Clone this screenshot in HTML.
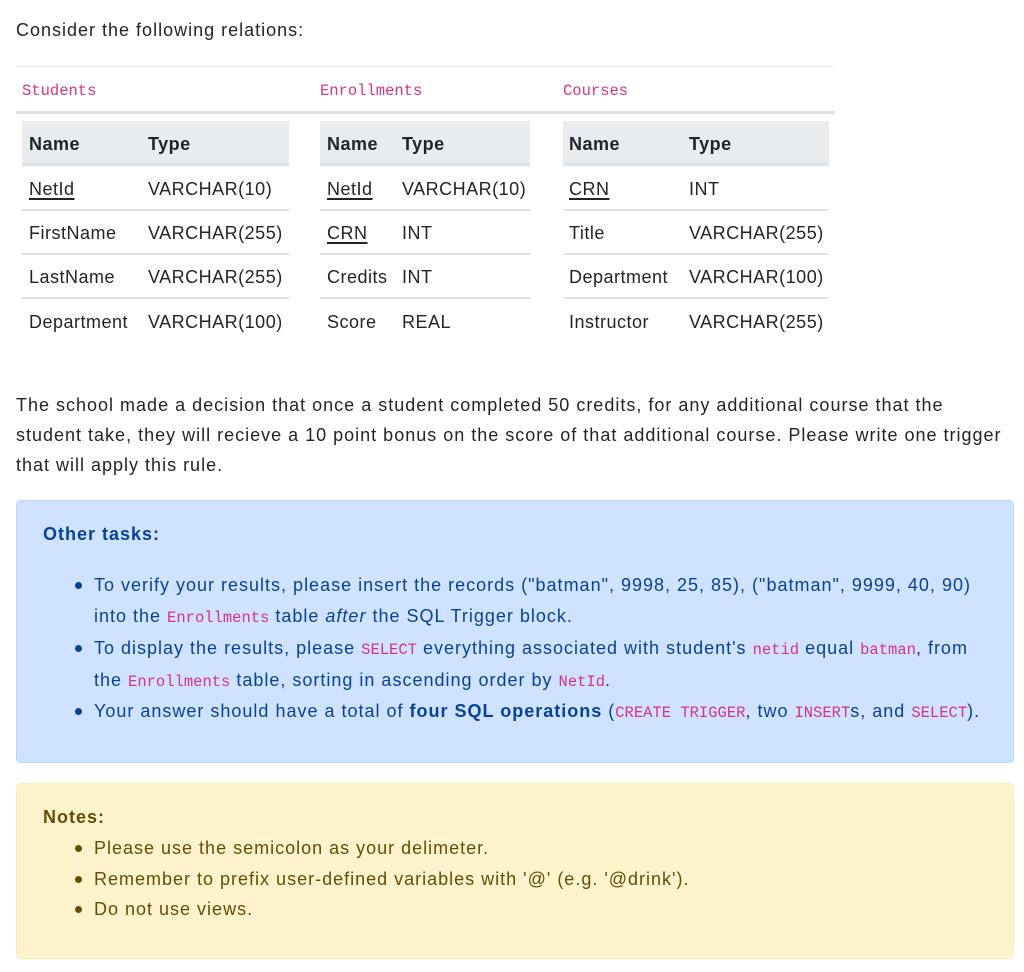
<!DOCTYPE html>
<html><head><meta charset="utf-8"><style>
*{margin:0;padding:0;box-sizing:border-box}
body{width:1024px;height:972px;background:#fff;font-family:"Liberation Sans",sans-serif;font-size:18px;letter-spacing:1px;color:#212529;position:relative;overflow:hidden}
.a{position:absolute;white-space:nowrap}
code,.c{font-family:"Liberation Mono",monospace;font-size:15.5px;letter-spacing:0;color:#d63384}
.hdr{position:absolute;background:#e9ecef;height:45px;border-bottom:3px solid #dee2e6}
.rl{position:absolute;height:2px;background:#dee2e6}
.t{position:absolute;white-space:nowrap;line-height:20px;letter-spacing:0.5px}
.b{font-weight:bold}
u{text-decoration-thickness:2px;text-underline-offset:3px}
.box{position:absolute;border-radius:5px}
.dot{position:absolute;width:7px;height:7px;border-radius:50%}
</style></head><body>
<div class="a" style="left:16px;top:20px">Consider the following relations:</div>
<div style="position:absolute;left:16px;top:66px;width:819px;height:1px;background:#e9ecef"></div>
<div class="a c" style="left:22px;top:82px">Students</div>
<div class="a c" style="left:320px;top:82px">Enrollments</div>
<div class="a c" style="left:563px;top:82px">Courses</div>
<div style="position:absolute;left:16px;top:111px;width:819px;height:3px;background:#dee2e6"></div>

<div class="hdr" style="left:22px;top:121px;width:267px"></div>
<div class="rl" style="left:22px;top:209px;width:267px"></div>
<div class="rl" style="left:22px;top:253px;width:267px"></div>
<div class="rl" style="left:22px;top:297px;width:267px"></div>
<div class="t b" style="left:29px;top:134px">Name</div><div class="t b" style="left:148px;top:134px">Type</div>
<div class="t" style="left:29px;top:179px"><u>NetId</u></div><div class="t" style="left:148px;top:179px">VARCHAR(10)</div>
<div class="t" style="left:29px;top:223px">FirstName</div><div class="t" style="left:148px;top:223px">VARCHAR(255)</div>
<div class="t" style="left:29px;top:267px">LastName</div><div class="t" style="left:148px;top:267px">VARCHAR(255)</div>
<div class="t" style="left:29px;top:312px">Department</div><div class="t" style="left:148px;top:312px">VARCHAR(100)</div>

<div class="hdr" style="left:320px;top:121px;width:210px"></div>
<div class="rl" style="left:320px;top:209px;width:210px"></div>
<div class="rl" style="left:320px;top:253px;width:210px"></div>
<div class="rl" style="left:320px;top:297px;width:210px"></div>
<div class="t b" style="left:327px;top:134px">Name</div><div class="t b" style="left:402px;top:134px">Type</div>
<div class="t" style="left:327px;top:179px"><u>NetId</u></div><div class="t" style="left:402px;top:179px">VARCHAR(10)</div>
<div class="t" style="left:327px;top:223px"><u>CRN</u></div><div class="t" style="left:402px;top:223px">INT</div>
<div class="t" style="left:327px;top:267px">Credits</div><div class="t" style="left:402px;top:267px">INT</div>
<div class="t" style="left:327px;top:312px">Score</div><div class="t" style="left:402px;top:312px">REAL</div>

<div class="hdr" style="left:563px;top:121px;width:266px"></div>
<div class="rl" style="left:563px;top:209px;width:266px"></div>
<div class="rl" style="left:563px;top:253px;width:266px"></div>
<div class="rl" style="left:563px;top:297px;width:266px"></div>
<div class="t b" style="left:569px;top:134px">Name</div><div class="t b" style="left:689px;top:134px">Type</div>
<div class="t" style="left:569px;top:179px"><u>CRN</u></div><div class="t" style="left:689px;top:179px">INT</div>
<div class="t" style="left:569px;top:223px">Title</div><div class="t" style="left:689px;top:223px">VARCHAR(255)</div>
<div class="t" style="left:569px;top:267px">Department</div><div class="t" style="left:689px;top:267px">VARCHAR(100)</div>
<div class="t" style="left:569px;top:312px">Instructor</div><div class="t" style="left:689px;top:312px">VARCHAR(255)</div>

<div class="a" style="left:16px;top:395px">The school made a decision that once a student completed 50 credits, for any additional course that the</div>
<div class="a" style="left:16px;top:425px">student take, they will recieve a 10 point bonus on the score of that additional course. Please write one trigger</div>
<div class="a" style="left:16px;top:455px">that will apply this rule.</div>

<div class="box" style="left:16px;top:500px;width:998px;height:263px;background:#cfe2ff;border:1px solid #b6d4fe"></div>
<div style="color:#084298">
<div class="a b" style="left:43px;top:524px">Other tasks:</div>
<div class="dot" style="left:75px;top:582px;background:#084298"></div>
<div class="a" style="left:94px;top:575px">To verify your results, please insert the records ("batman", 9998, 25, 85), ("batman", 9999, 40, 90)</div>
<div class="a" style="left:94px;top:606px">into the <code>Enrollments</code> table <i>after</i> the SQL Trigger block.</div>
<div class="dot" style="left:75px;top:645px;background:#084298"></div>
<div class="a" style="left:94px;top:638px">To display the results, please <code>SELECT</code> everything associated with student's <code>netid</code> equal <code>batman</code>, from</div>
<div class="a" style="left:94px;top:670px">the <code>Enrollments</code> table, sorting in ascending order by <code>NetId</code>.</div>
<div class="dot" style="left:75px;top:708px;background:#084298"></div>
<div class="a" style="left:94px;top:701px">Your answer should have a total of <b>four SQL operations</b> (<code>CREATE TRIGGER</code>, two <code>INSERT</code>s, and <code>SELECT</code>).</div>
</div>

<div class="box" style="left:16px;top:783px;width:998px;height:176px;background:#fff3cd;border:1px solid #ffecb5"></div>
<div style="color:#664d03">
<div class="a b" style="left:43px;top:807px">Notes:</div>
<div class="dot" style="left:75px;top:845px;background:#664d03"></div>
<div class="a" style="left:94px;top:838px">Please use the semicolon as your delimeter.</div>
<div class="dot" style="left:75px;top:876px;background:#664d03"></div>
<div class="a" style="left:94px;top:869px">Remember to prefix user-defined variables with '@' (e.g. '@drink').</div>
<div class="dot" style="left:75px;top:906px;background:#664d03"></div>
<div class="a" style="left:94px;top:899px">Do not use views.</div>
</div>
</body></html>
